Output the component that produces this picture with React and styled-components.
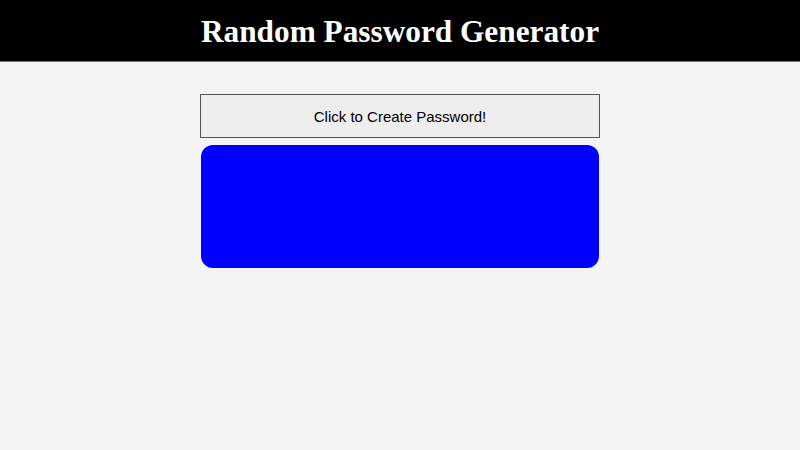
import React from "react";
import styled, { createGlobalStyle } from "styled-components";

const GlobalStyle = createGlobalStyle`
  html, body {
    margin: 0;
    padding: 0;
    background: #f4f4f4;
  }
  * { box-sizing: border-box; }
`;

const Header = styled.header`
  height: 62px;
  padding-top: 3px;
  background: #000;
  border-bottom: 1px solid #777;
  display: flex;
  align-items: center;
  justify-content: center;
`;

const Title = styled.h1`
  margin: 0;
  color: #fff;
  font-family: "Liberation Serif", "Times New Roman", serif;
  font-weight: bold;
  font-size: 31.3px;
  line-height: 1;
`;

const Main = styled.main`
  width: 400px;
  margin: 32px auto 0;
  display: flex;
  flex-direction: column;
  gap: 7px;
`;

const GenerateButton = styled.button`
  height: 44px;
  width: 100%;
  background: #eeeeee;
  border: 1px solid #555;
  color: #000;
  font-family: "Liberation Sans", Arial, sans-serif;
  font-size: 15px;
  cursor: pointer;
`;

const Output = styled.div`
  height: 123px;
  margin: 0 1px;
  background: #0000ff;
  border-radius: 12px;
`;

export default function App() {
  return (
    <>
      <GlobalStyle />
      <Header>
        <Title>Random Password Generator</Title>
      </Header>
      <Main>
        <GenerateButton>Click to Create Password!</GenerateButton>
        <Output />
      </Main>
    </>
  );
}
